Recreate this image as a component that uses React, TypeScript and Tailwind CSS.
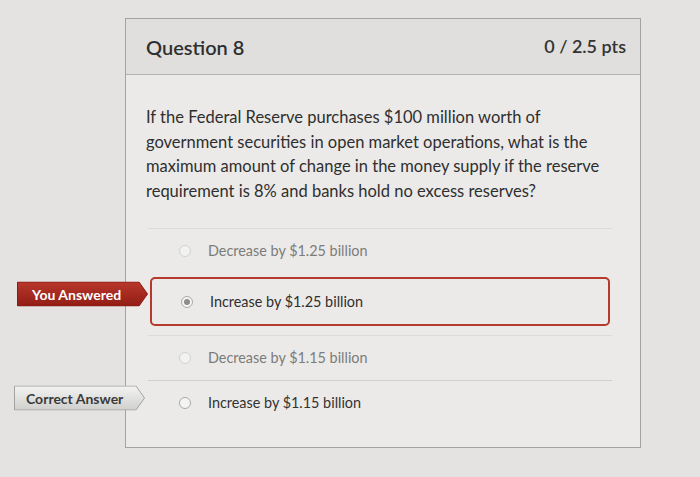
import React from "react";

const font = { fontFamily: "Lato, 'Open Sans', sans-serif" };

function Radio({ selected, faded }: { selected?: boolean; faded?: boolean }) {
  return (
    <span
      className={`flex h-[12px] w-[12px] shrink-0 items-center justify-center rounded-full border ${
        faded ? "border-[#d2d2d0] bg-[#f2f2f0]" : "border-[#a9a9a7] bg-[#f4f4f2]"
      }`}
    >
      {selected && <span className="h-[6px] w-[6px] rounded-full bg-[#8d8d8b]" />}
    </span>
  );
}

function Badge({ kind }: { kind: "you" | "correct" }) {
  const you = kind === "you";
  return (
    <div
      className={`absolute h-[25px] w-[131px] -translate-y-1/2 ${
        you ? "right-[calc(100%+4px)] top-[calc(50%-8px)]" : "right-[calc(100%+3px)] top-[calc(50%-5px)]"
      }`}
    >
      <svg width="131" height="25" viewBox="0 0 131 25" className="absolute inset-0">
        <defs>
          <linearGradient id={`g-${kind}`} x1="0" y1="0" x2="0" y2="1">
            {you ? (
              <>
                <stop offset="0" stopColor="#b8372b" />
                <stop offset="1" stopColor="#921d15" />
              </>
            ) : (
              <>
                <stop offset="0" stopColor="#f3f3f1" />
                <stop offset="1" stopColor="#cfcfcd" />
              </>
            )}
          </linearGradient>
        </defs>
        <polygon
          points="0.5,0.5 122,0.5 130.5,12.5 122,24.5 0.5,24.5"
          fill={`url(#g-${kind})`}
          stroke={you ? "#8a1c14" : "#a3a3a1"}
          strokeWidth="1"
        />
      </svg>
      <span
        className={`relative flex h-full items-center text-[14px] font-bold ${
          you ? "pl-[15px] text-white" : "pl-[12px] text-[#3a3a3a]"
        }`}
        style={font}
      >
        {you ? "You Answered" : "Correct Answer"}
      </span>
    </div>
  );
}

export default function App() {
  return (
    <div className="h-[477px] w-[700px] overflow-hidden bg-[#e4e3e1] pt-[18px] pl-[125px]" style={font}>
      <div className="h-[430px] w-[516px] border border-[#a3a3a1] bg-[#ebeae8]">
        <div className="flex h-[56px] items-center justify-between border-b border-[#b3b3b1] bg-[#e0dfdd] pl-[20px] pr-[14px]">
          <span className="text-[20px] font-semibold text-[#2f2f2f]">Question 8</span>
          <span className="text-[18px] font-semibold text-[#333]">0 / 2.5 pts</span>
        </div>
        <div className="pl-[20px] pt-[30px]">
          <p className="w-[464px] text-[16.5px] leading-[24.5px] text-[#2f2f2f]">
            If the Federal Reserve purchases $100 million worth of government securities in open market operations,
            what is the maximum amount of change in the money supply if the reserve requirement is 8% and banks hold
            no excess reserves?
          </p>
        </div>
        <div className="ml-[22px] mr-[28px] mt-[25px]">
          <div className="border-t border-[#dcdcda]" />
          <div className="flex h-[44px] items-center gap-[17px] pl-[31px] text-[14.4px] text-[#7c7c7a]">
            <Radio faded />
            <span>Decrease by $1.25 billion</span>
          </div>
          <div className="relative mt-[4px] ml-[2px] mr-[2px] flex h-[49px] items-center gap-[17px] rounded-[5px] border-2 border-[#b5392c] pl-[29px] text-[14.4px] text-[#2f2f2f]">
            <Badge kind="you" />
            <Radio selected />
            <span>Increase by $1.25 billion</span>
          </div>
          <div className="mt-[9px] border-t border-[#dcdcda]" />
          <div className="flex h-[44px] items-center gap-[17px] pl-[31px] text-[14.4px] text-[#7c7c7a]">
            <Radio faded />
            <span>Decrease by $1.15 billion</span>
          </div>
          <div className="border-t border-[#d0d0ce]" />
          <div className="relative flex h-[44px] items-center gap-[17px] pl-[31px] text-[14.4px] text-[#333]">
            <Badge kind="correct" />
            <Radio />
            <span>Increase by $1.15 billion</span>
          </div>
        </div>
      </div>
    </div>
  );
}
